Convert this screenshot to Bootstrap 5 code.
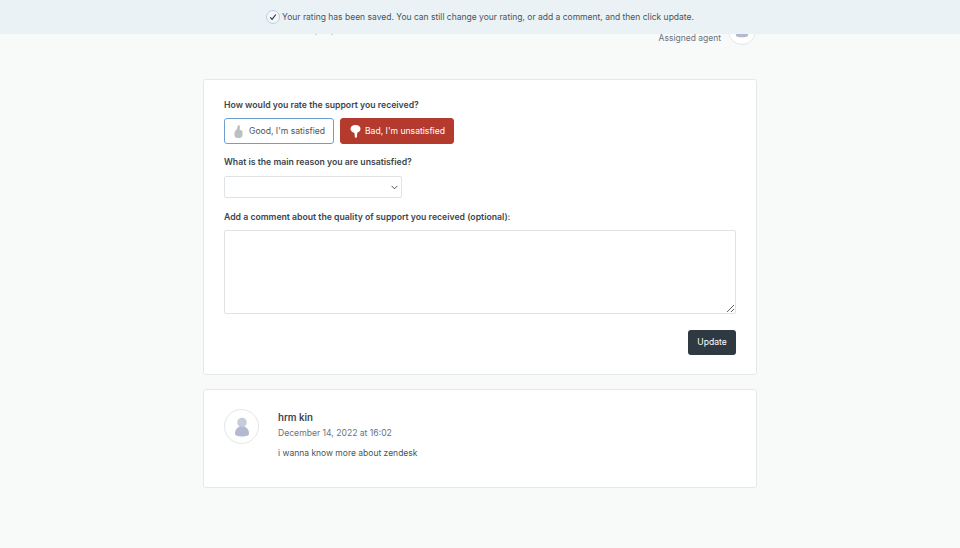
<!DOCTYPE html>
<html lang="en">

<head>
  <meta charset="UTF-8">
  <meta name="viewport" content="width=device-width, initial-scale=1.0">
  <title>Rate your support</title>
  <link href="https://cdn.jsdelivr.net/npm/bootstrap@5.3.3/dist/css/bootstrap.min.css" rel="stylesheet">
  <style>
    body {
      background: #f8f9f9;
      font-family: Inter, "Liberation Sans", sans-serif;
      font-size: 8.5px;
      color: #49545c;
    }
    .saved-banner {
      position: fixed;
      top: 0;
      left: 0;
      right: 0;
      height: 34px;
      background: #eaf2f6;
      color: #49545c;
      z-index: 10;
      gap: 2px;
    }
    .tick-ring {
      width: 14px;
      height: 14px;
      border: 1px solid #b9cfe0;
      border-radius: 50%;
      background: #f4f8fa;
    }
    .page-wrap {
      width: 554px;
      margin-left: 203px;
      padding-top: 17px;
    }
    .head-row {
      height: 28px;
      margin-bottom: 34px;
      color: #68737d;
    }
    .under-marks {
      gap: 14px;
      margin: 16px 0 0 112px;
    }
    .under-marks span {
      width: 2px;
      height: 2px;
      background: #d3d6d8;
    }
    .agent-text {
      margin-top: 15px;
      margin-right: 7px;
      line-height: 13px;
    }
    .avatar-ring {
      border: 1px solid #e3e6e8;
      border-radius: 50%;
      background: #fff;
      flex: none;
    }
    .avatar-sm { width: 28px; height: 28px; margin-right: 1px; }
    .avatar-sm svg { margin-bottom: 5px; }
    .avatar-lg { width: 35px; height: 35px; margin-right: 19px; }
    .panel-box {
      background: #fff;
      border: 1px solid #e4e8e9;
      border-radius: 3px;
    }
    .rate-box {
      height: 296px;
      padding: 18px 20px 0;
      margin-bottom: 14px;
    }
    .field-label {
      font-size: 8.7px;
      font-weight: 600;
      color: #3d464d;
      line-height: 14px;
    }
    .rate-row {
      gap: 6px;
      margin: 6px 0 11px;
    }
    .rate-btn {
      height: 26px;
      font-size: 8.6px;
      border-radius: 3px;
      padding: 0 0 0 9px;
    }
    .rate-good {
      width: 110px;
      background: #fff;
      border: 1px solid #6f9fd0;
      color: #49545c;
      gap: 6px;
    }
    .rate-bad {
      width: 114px;
      background: #b43a2d;
      border: 1px solid #b43a2d;
      color: #fff;
      gap: 4px;
    }
    .reason-select {
      width: 178px;
      height: 22px;
      margin: 7px 0 12px;
      border: 1px solid #dfe3e5;
      border-radius: 2px;
      background-position: right 2px center;
      background-size: 9px 7px;
      padding: 0 16px 0 6px;
      font-size: 8.6px;
    }
    .comment-area {
      height: 84px;
      margin: 6px 0 16px;
      border: 1px solid #dfe3e5;
      border-radius: 2px;
      font-size: 8.6px;
    }
    .update-btn {
      width: 48px;
      height: 25px;
      background: #2f3941;
      border: 0;
      border-radius: 3px;
      color: #fff;
      font-size: 8.6px;
      padding: 0;
    }
    .comment-box {
      height: 99px;
      padding: 19px 20px;
    }
    .author-name {
      margin-top: 2px;
      font-size: 9.7px;
      font-weight: 600;
      color: #3d464d;
      line-height: 14px;
    }
    .comment-date {
      margin: 1px 0 6px;
      font-size: 8.6px;
      color: #68737d;
      line-height: 14px;
    }
    .comment-text {
      font-size: 8.5px;
      line-height: 14px;
    }
  </style>
</head>

<body>
  <div class="saved-banner d-flex align-items-center justify-content-center">
    <span class="tick-ring d-flex align-items-center justify-content-center">
      <svg width="8" height="8" viewBox="0 0 8 8"><path d="M1.2 4.3 3.1 6.3 6.8 1.5" fill="none" stroke="#2f3941" stroke-width="1.2"/></svg>
    </span>
    <span>Your rating has been saved. You can still change your rating, or add a comment, and then click update.</span>
  </div>

  <div class="page-wrap">
    <div class="head-row d-flex">
      <div class="under-marks d-flex align-items-start"><span></span><span></span></div>
      <span class="agent-text ms-auto">Assigned agent</span>
      <span class="avatar-ring avatar-sm d-flex align-items-center justify-content-center overflow-hidden">
        <svg width="14" height="18" viewBox="0 0 16 20"><circle cx="8" cy="5.500" r="4.800" fill="#c6ccdb"/><path d="M1 17c0-5 2.500-7.500 7-7.500s7 2.500 7 7.500c0 1.500-3 2.500-7 2.500S1 18.500 1 17z" fill="#b3bad0"/></svg>
      </span>
    </div>

    <div class="panel-box rate-box">
      <div class="field-label">How would you rate the support you received?</div>
      <div class="rate-row d-flex">
        <button type="button" class="btn rate-btn rate-good d-flex align-items-center">
          <svg width="9" height="13" viewBox="0 0 9 13"><path d="M4.800 0C5.700 0 5.900 1 5.900 2L5.800 5C7.200 5 8.500 5.500 8.500 6.800V10C8.500 12 7.200 13 5.500 13H3.500C1.500 13 .5 12 .5 10V7.800C.5 6.500 1.500 5.800 2.300 5 3.300 3.800 3.500 0 4.800 0z" fill="#bcc0c3"/></svg>
          <span>Good, I'm satisfied</span>
        </button>
        <button type="button" class="btn rate-btn rate-bad d-flex align-items-center">
          <svg width="11" height="13" viewBox="0 0 11 13"><path d="M.5 3.800C.5 1.300 2.500 0 5.500 0s5 1.300 5 3.800C10.500 6 9 7 7.600 7.600 7 8.500 7.200 10 7 11.500 6.800 13.300 4.900 13.300 4.800 11.500 4.700 10 4.800 8.800 4.100 7.800 2.200 7.200.5 6 .5 3.800z" fill="#fff"/></svg>
          <span>Bad, I'm unsatisfied</span>
        </button>
      </div>
      <div class="field-label">What is the main reason you are unsatisfied?</div>
      <select class="form-select reason-select" aria-label="Reason"><option></option></select>
      <div class="field-label">Add a comment about the quality of support you received (optional):</div>
      <textarea class="form-control comment-area" aria-label="Comment"></textarea>
      <div class="d-flex justify-content-end">
        <button type="button" class="btn update-btn">Update</button>
      </div>
    </div>

    <div class="panel-box comment-box d-flex">
      <span class="avatar-ring avatar-lg d-flex align-items-center justify-content-center">
        <svg width="16" height="20" viewBox="0 0 16 20"><circle cx="8" cy="5.500" r="4.800" fill="#c6ccdb"/><path d="M1 17c0-5 2.500-7.500 7-7.500s7 2.500 7 7.500c0 1.500-3 2.500-7 2.500S1 18.500 1 17z" fill="#b3bad0"/></svg>
      </span>
      <div>
        <div class="author-name">hrm kin</div>
        <div class="comment-date">December 14, 2022 at 16:02</div>
        <div class="comment-text">i wanna know more about zendesk</div>
      </div>
    </div>
  </div>

  <script src="https://cdn.jsdelivr.net/npm/bootstrap@5.3.3/dist/js/bootstrap.bundle.min.js"></script>
</body>

</html>
